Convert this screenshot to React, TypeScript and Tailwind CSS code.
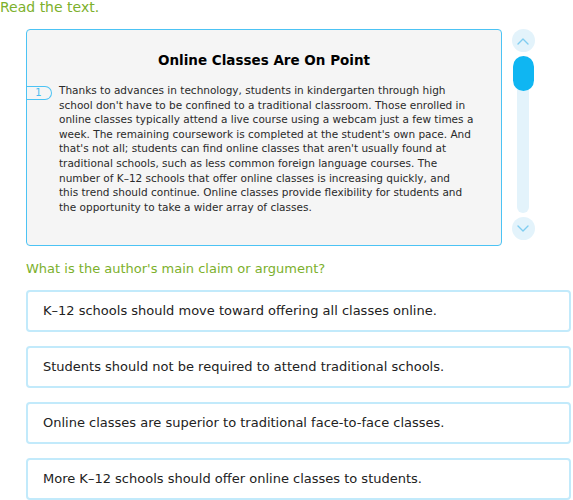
const lines = [
  "Thanks to advances in technology, students in kindergarten through high",
  "school don't have to be confined to a traditional classroom. Those enrolled in",
  "online classes typically attend a live course using a webcam just a few times a",
  "week. The remaining coursework is completed at the student's own pace. And",
  "that's not all; students can find online classes that aren't usually found at",
  "traditional schools, such as less common foreign language courses. The",
  "number of K\u201312 schools that offer online classes is increasing quickly, and",
  "this trend should continue. Online classes provide flexibility for students and",
  "the opportunity to take a wider array of classes.",
];

const choices = [
  "K\u201312 schools should move toward offering all classes online.",
  "Students should not be required to attend traditional schools.",
  "Online classes are superior to traditional face-to-face classes.",
  "More K\u201312 schools should offer online classes to students.",
];

const Chevron = ({ up }: { up?: boolean }) => (
  <svg width="12" height="8" viewBox="0 0 12 8" fill="none">
    <path
      d={up ? "M1 7 L6 2 L11 7" : "M1 1 L6 6 L11 1"}
      stroke="#7fcdf0"
      strokeWidth="1.4"
      strokeLinecap="round"
      strokeLinejoin="round"
    />
  </svg>
);

export default function App() {
  return (
    <div className="w-[573px] h-[500px] overflow-hidden bg-white font-['DejaVu_Sans',Verdana,sans-serif] text-black">
      <div className="text-[14px] leading-[14px] text-[#7cb02c]">Read the text.</div>

      <div className="flex gap-[9px] mt-[15px] ml-[26px]">
        <div className="w-[476px] h-[217px] border border-[#4cc3f4] rounded-[4px] bg-[#f5f5f5] pt-[22px]">
          <h1 className="text-center font-bold text-[13.5px] leading-[16px]">Online Classes Are On Point</h1>
          <div className="flex mt-[15px] pr-[10px]">
            <div className="shrink-0 w-[26px] h-[14px] -ml-px mt-[3px] border border-l-0 border-[#4cc3f4] rounded-r-full text-[#49bdf0] text-[10px] leading-[12px] text-center">
              1
            </div>
            <p className="ml-[7px] text-[10.5px] leading-[14.6px] text-[#2a2a2a]">
              {lines.map((l) => (
                <span key={l} className="block whitespace-nowrap">
                  {l}
                </span>
              ))}
            </p>
          </div>
        </div>

        <div className="flex flex-col items-center w-[24px]">
          <div className="w-[23px] h-[23px] rounded-full bg-[#e3f3fb] flex items-center justify-center">
            <Chevron up />
          </div>
          <div className="relative w-[12px] h-[157px] mt-[4px] rounded-full bg-[#e3f3fb]">
            <div className="absolute left-[-4px] top-0 w-[21px] h-[35px] rounded-full bg-[#0fb6f2]" />
          </div>
          <div className="w-[23px] h-[23px] rounded-full bg-[#e3f3fb] flex items-center justify-center mt-[4px]">
            <Chevron />
          </div>
        </div>
      </div>

      <div className="ml-[26px] mt-[15px] text-[13px] leading-[16px] text-[#7cb02c]">
        What is the author's main claim or argument?
      </div>

      <div className="ml-[26px] mr-[2px] mt-[13px] flex flex-col gap-[14px]">
        {choices.map((c) => (
          <div
            key={c}
            className="h-[42px] border-2 border-[#c2eafb] rounded-[4px] flex items-center pl-[15px] text-[13px] text-[#222]"
          >
            {c}
          </div>
        ))}
      </div>
    </div>
  );
}
